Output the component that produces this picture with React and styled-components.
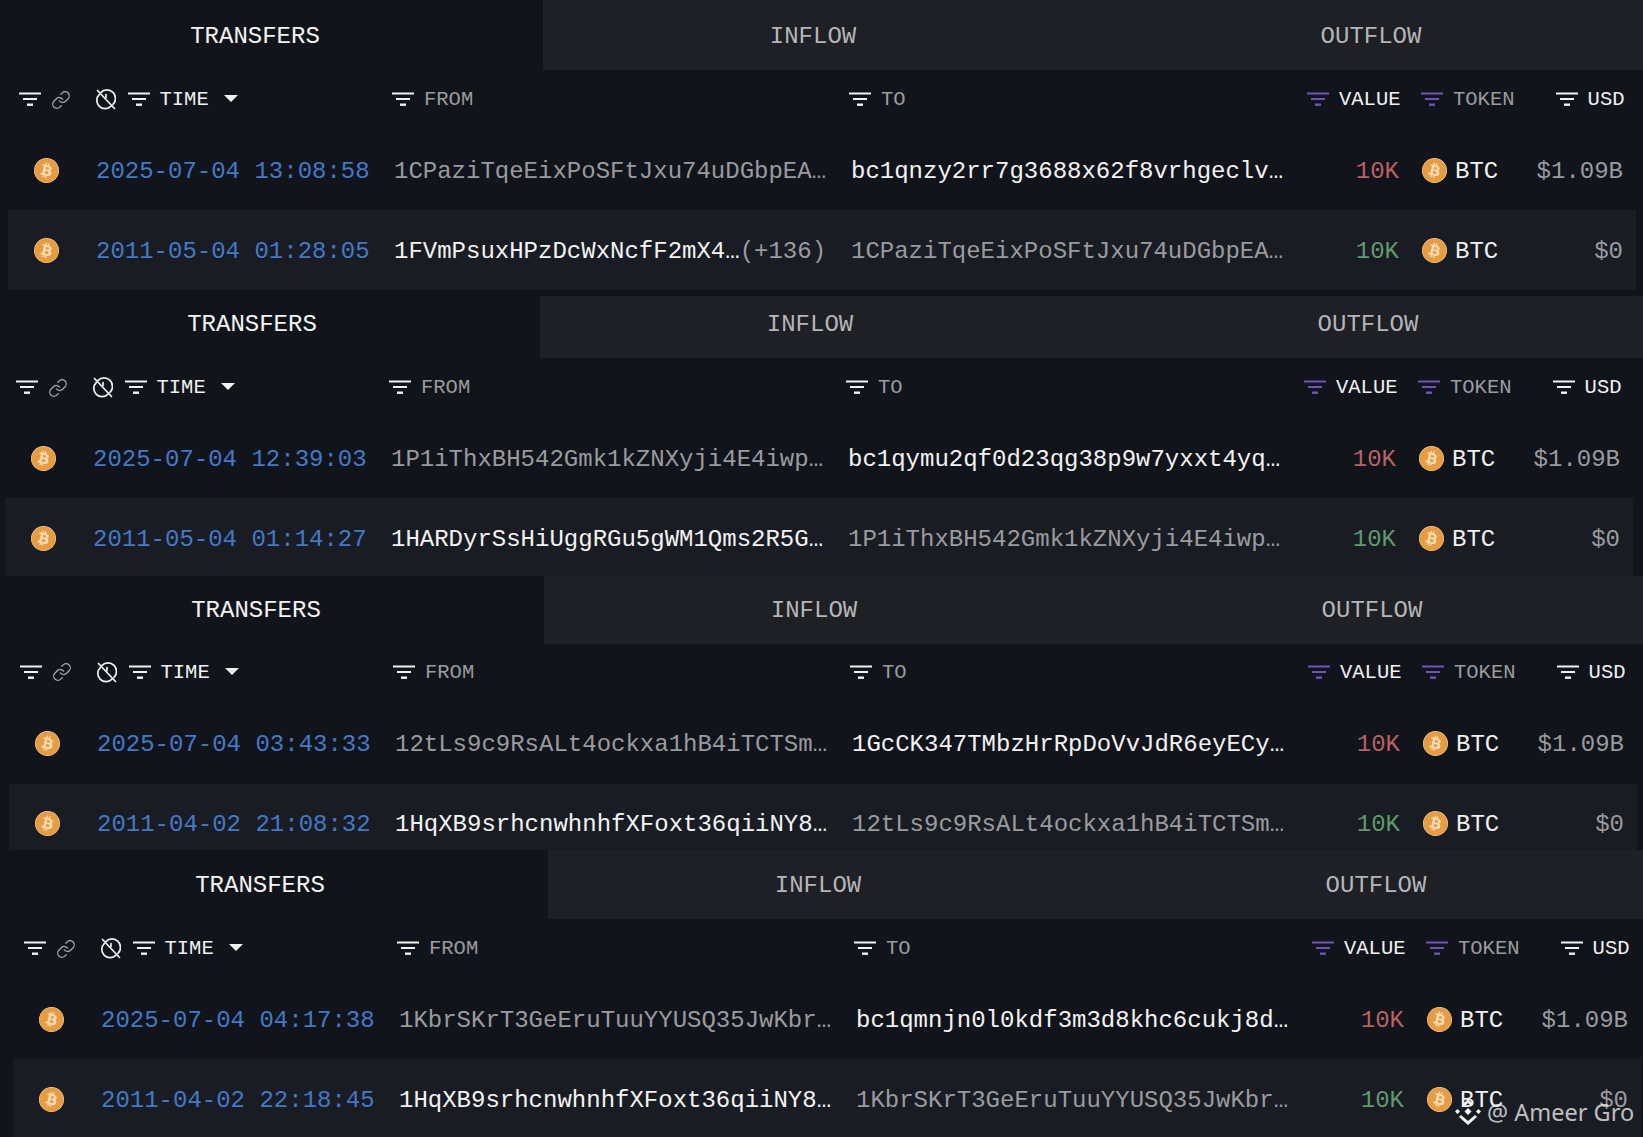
import styled, { createGlobalStyle } from "styled-components";
import { FaBitcoin } from "react-icons/fa";
import { Link as LinkIcon } from "lucide-react";

const GlobalStyle = createGlobalStyle`
  html, body {
    margin: 0;
    height: 1137px;
    overflow: hidden;
    background: #12141b;
  }
  * { box-sizing: border-box; }
`;

const Page = styled.div`
  position: relative;
  width: 1643px;
  height: 1137px;
  overflow: hidden;
  background: #12141b;
  font-family: "Liberation Mono", "DejaVu Sans Mono", monospace;
  font-size: 24px;
  color: #f1f1f1;
`;

const Section = styled.section`
  height: ${(p) => p.$height}px;
  overflow: hidden;
`;

const Inner = styled.div`
  width: 1680px;
  margin-left: ${(p) => p.$shift}px;
`;

const Tabs = styled.div`
  display: grid;
  grid-template-columns: 543px 540px 597px;
  height: ${(p) => p.$height}px;
`;

const Tab = styled.div`
  display: flex;
  align-items: center;
  justify-content: center;
  padding: ${(p) => p.$top}px ${(p) => p.$right}px ${(p) => p.$bottom}px 0;
  background: ${(p) => (p.$active ? "transparent" : "#1e2025")};
  color: ${(p) => (p.$active ? "#f4f4f4" : "#b4b5b8")};
`;

const Columns = styled.div`
  display: grid;
  grid-template-columns: 88px 298px 457px 440px 108px 111px 113px;
  align-items: center;
  margin-left: 8px;
`;

const HeadRow = styled(Columns)`
  width: 1616px;
  height: 60px;
  padding-bottom: ${(p) => p.$lift}px;
  font-size: 20.5px;
  svg { flex: none; }
`;

const HeadCell = styled.div`
  display: flex;
  align-items: center;
  gap: ${(p) => p.$gap || 10}px;
  justify-content: ${(p) => (p.$end ? "flex-end" : "flex-start")};
  padding-left: ${(p) => p.$pad || 0}px;
  margin-left: ${(p) => p.$pull || 0}px;
  margin-right: ${(p) => (p.$end ? -1.5 : 0)}px;
`;

const HeadLabel = styled.span`
  color: ${(p) => (p.$dim ? "#9b9c9f" : "#f1f1f1")};
  margin-left: ${(p) => p.$pull || 0}px;
`;

const Caret = styled.span`
  width: 0;
  height: 0;
  margin: 0 0 2px 3px;
  border-left: 7.5px solid transparent;
  border-right: 7.5px solid transparent;
  border-top: 7px solid #f1f1f1;
`;

const DataRow = styled(Columns)`
  width: 1628px;
  height: 80px;
  padding: 2px 13px 0 0;
  background: ${(p) => (p.$alt ? "#1a1c23" : "transparent")};
`;

const CoinCell = styled.div`
  padding-left: 26px;
  display: flex;
`;

const Coin = styled.span`
  display: inline-flex;
  width: 25px;
  height: 25px;
  flex: none;
  margin-top: -2px;
  border-radius: 50%;
  background: #f6dcb4;
  color: #e59c42;
  font-size: 25px;
  svg { display: block; }
`;

const DateText = styled.span`
  color: #4279c9;
`;

const Address = styled.div`
  white-space: nowrap;
  color: ${(p) => (p.$dim ? "#9a9b9e" : "#f3f3f3")};
`;

const Extra = styled.span`
  color: #9a9b9e;
`;

const Amount = styled.div`
  text-align: right;
  color: ${(p) => (p.$in ? "#5f9a6b" : "#b96263")};
`;

const TokenCell = styled.div`
  display: flex;
  align-items: center;
  gap: 8px;
  padding-left: 23px;
`;

const Usd = styled.div`
  text-align: right;
  color: #9a9b9e;
`;

const Watermark = styled.div`
  position: absolute;
  left: 1454px;
  top: 1098px;
  display: flex;
  align-items: center;
  gap: 5px;
  font-family: "Noto Sans", sans-serif;
  font-size: 23.5px;
  line-height: 28px;
  white-space: nowrap;
  color: rgba(235, 235, 235, 0.8);
`;

const FilterIcon = ({ color = "#f1f1f1" }) => (
  <svg width="22" height="15" viewBox="0 0 22 15" fill={color}>
    <rect x="0" y="0.5" width="22" height="2" />
    <rect x="4" y="6" width="14" height="2" />
    <rect x="8" y="11.5" width="6" height="2.4" />
  </svg>
);

const ClockOffIcon = () => (
  <svg width="20" height="21" viewBox="0 0 20 21" fill="none" stroke="#f1f1f1" strokeWidth="1.7" strokeLinecap="round">
    <path d="M5 3.4A8 8 0 0 1 17 15.4M15 17.2A8 8 0 0 1 3.2 5.6" />
    <path d="M10 5.5V8.5" />
    <path d="M1.5 1.5L18.5 19.5" />
  </svg>
);

const BinanceMark = () => (
  <svg width="28" height="26" viewBox="0 0 28 26" fill="#f4f4f4">
    <path d="M14 0L19 5L17 7L14 4L11 7L9 5Z" />
    <path d="M14 9L17.5 12.5L14 16L10.5 12.5Z" />
    <path d="M3.5 10L6 12.5L3.5 15L1 12.5Z" />
    <path d="M24.5 10L27 12.5L24.5 15L22 12.5Z" />
    <path d="M7 16L14 22L21 16L23 18L14 26L5 18Z" />
  </svg>
);

const sections = [
  {
    height: 296, shift: 0, tabHeight: 70, tabTop: 3, tabBottom: 0, headLift: 1,
    rows: [
      { time: "2025-07-04 13:08:58", from: "1CPaziTqeEixPoSFtJxu74uDGbpEA…", to: "bc1qnzy2rr7g3688x62f8vrhgeclv…", fromDim: true, usd: "$1.09B" },
      { time: "2011-05-04 01:28:05", from: "1FVmPsuxHPzDcWxNcfF2mX4…", extra: "(+136)", to: "1CPaziTqeEixPoSFtJxu74uDGbpEA…", toDim: true, usd: "$0", in: true },
    ],
  },
  {
    height: 280, shift: -3, tabHeight: 62, tabTop: 0, tabBottom: 5, headLift: 1,
    rows: [
      { time: "2025-07-04 12:39:03", from: "1P1iThxBH542Gmk1kZNXyji4E4iwp…", to: "bc1qymu2qf0d23qg38p9w7yxxt4yq…", fromDim: true, usd: "$1.09B" },
      { time: "2011-05-04 01:14:27", from: "1HARDyrSsHiUggRGu5gWM1Qms2R5G…", to: "1P1iThxBH542Gmk1kZNXyji4E4iwp…", toDim: true, usd: "$0", in: true },
    ],
  },
  {
    height: 274, shift: 1, tabHeight: 67.5, tabTop: 1, tabBottom: 0, headLift: 3,
    rows: [
      { time: "2025-07-04 03:43:33", from: "12tLs9c9RsALt4ockxa1hB4iTCTSm…", to: "1GcCK347TMbzHrRpDoVvJdR6eyECy…", fromDim: true, usd: "$1.09B" },
      { time: "2011-04-02 21:08:32", from: "1HqXB9srhcnwhnhfXFoxt36qiiNY8…", to: "12tLs9c9RsALt4ockxa1hB4iTCTSm…", toDim: true, usd: "$0", in: true },
    ],
  },
  {
    height: 287, shift: 5, tabHeight: 69, tabTop: 1, tabBottom: 0, headLift: 1,
    rows: [
      { time: "2025-07-04 04:17:38", from: "1KbrSKrT3GeEruTuuYYUSQ35JwKbr…", to: "bc1qmnjn0l0kdf3m3d8khc6cukj8d…", fromDim: true, usd: "$1.09B" },
      { time: "2011-04-02 22:18:45", from: "1HqXB9srhcnwhnhfXFoxt36qiiNY8…", to: "1KbrSKrT3GeEruTuuYYUSQ35JwKbr…", toDim: true, usd: "$0", in: true },
    ],
  },
];

function BtcCoin() {
  return (
    <Coin>
      <FaBitcoin />
    </Coin>
  );
}

function Head({ lift }) {
  return (
    <HeadRow $lift={lift}>
      <HeadCell $pad={11} $gap={10}>
        <FilterIcon />
        <LinkIcon size={20} color="#a9aaad" strokeWidth={1.5} />
      </HeadCell>
      <HeadCell $gap={12}>
        <ClockOffIcon />
        <FilterIcon />
        <HeadLabel $pull={-2.5}>TIME</HeadLabel>
        <Caret />
      </HeadCell>
      <HeadCell $pull={-2}>
        <FilterIcon />
        <HeadLabel $dim>FROM</HeadLabel>
      </HeadCell>
      <HeadCell $pull={-2}>
        <FilterIcon />
        <HeadLabel $dim>TO</HeadLabel>
      </HeadCell>
      <HeadCell $end>
        <FilterIcon color="#7153bb" />
        <HeadLabel>VALUE</HeadLabel>
      </HeadCell>
      <HeadCell $pad={22}>
        <FilterIcon color="#7153bb" />
        <HeadLabel $dim>TOKEN</HeadLabel>
      </HeadCell>
      <HeadCell $end>
        <FilterIcon />
        <HeadLabel>USD</HeadLabel>
      </HeadCell>
    </HeadRow>
  );
}

function Row({ row, alt }) {
  return (
    <DataRow $alt={alt}>
      <CoinCell><BtcCoin /></CoinCell>
      <DateText>{row.time}</DateText>
      <Address $dim={row.fromDim}>
        {row.from}
        {row.extra && <Extra>{row.extra}</Extra>}
      </Address>
      <Address $dim={row.toDim}>{row.to}</Address>
      <Amount $in={row.in}>10K</Amount>
      <TokenCell>
        <BtcCoin />
        BTC
      </TokenCell>
      <Usd>{row.usd}</Usd>
    </DataRow>
  );
}

export default function App() {
  return (
    <Page>
      <GlobalStyle />
      {sections.map((s) => (
        <Section key={s.rows[0].time} $height={s.height}>
          <Inner $shift={s.shift}>
            <Tabs $height={s.tabHeight}>
              <Tab $active $top={s.tabTop} $bottom={s.tabBottom} $right={33}>TRANSFERS</Tab>
              <Tab $top={s.tabTop} $bottom={s.tabBottom} $right={0}>INFLOW</Tab>
              <Tab $top={s.tabTop} $bottom={s.tabBottom} $right={21}>OUTFLOW</Tab>
            </Tabs>
            <Head lift={s.headLift} />
            {s.rows.map((row, i) => (
              <Row key={row.time} row={row} alt={i === 1} />
            ))}
          </Inner>
        </Section>
      ))}
      <Watermark>
        <BinanceMark />
        @ Ameer Gro
      </Watermark>
    </Page>
  );
}
